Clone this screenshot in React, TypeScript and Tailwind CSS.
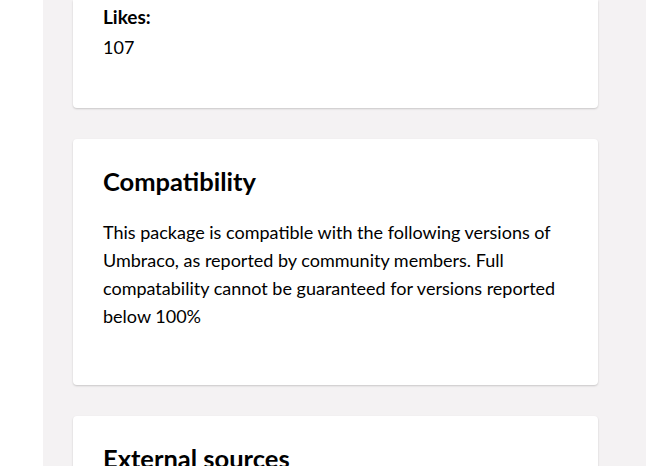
import React from 'react';

const Card: React.FC<{ className?: string; children: React.ReactNode }> = ({ className = '', children }) => (
  <div className={`bg-white rounded-[4px] shadow-[0_1px_2px_rgba(0,0,0,0.18)] px-[30px] ${className}`}>{children}</div>
);

export default function App() {
  return (
    <div className="flex h-[466px] overflow-hidden bg-white text-black" style={{ fontFamily: 'Lato, "Noto Sans", sans-serif' }}>
      <div className="w-[43px] shrink-0 bg-white" />
      <div className="flex-1 bg-[#f4f2f3] pl-[30px] flex flex-col gap-[31px]">
        <Card className="w-[525px] rounded-t-none pt-[3px] pb-[47px]">
          <div className="text-[19px] font-bold leading-[28px]">Likes:</div>
          <div className="text-[18px] leading-[28px] mt-[2px]">107</div>
        </Card>

        <Card className="w-[525px] pt-[27px] pb-[55px]">
          <h2 className="text-[25.5px] font-bold leading-[1.2] mb-[21px]">Compatibility</h2>
          <p className="text-[18px] leading-[28px]">
            This package is compatible with the following versions of Umbraco, as reported by community members. Full
            compatability cannot be guaranteed for versions reported below 100%
          </p>
        </Card>

        <Card className="w-[525px] pt-[27px] pb-[55px]">
          <h2 className="text-[25.5px] font-bold leading-[1.2] mb-[21px]">External sources</h2>
          <p className="text-[18px] leading-[28px]">&nbsp;</p>
        </Card>
      </div>
    </div>
  );
}
